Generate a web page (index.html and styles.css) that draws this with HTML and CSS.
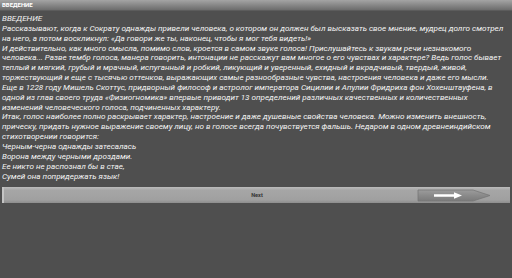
FILE: index.html
```html
<!DOCTYPE html>
<html lang="ru">

<head>
    <meta charset="UTF-8" />
    <title>Введение</title>
    <link rel="stylesheet" href="styles.css">
</head>

<body>

    <!-- Заголовок окна -->
    <div class="title-bar">ВВЕДЕНИЕ</div>

    <!-- Текст главы -->
    <div class="content">
        <p>ВВЕДЕНИЕ</p>
        <p>Рассказывают, когда к Сократу однажды привели человека, о котором он должен был высказать свое мнение, мудрец долго смотрел<br>на него, а потом воскликнул: «Да говори же ты, наконец, чтобы я мог тебя видеть!»</p>
        <p>И действительно, как много смысла, помимо слов, кроется в самом звуке голоса! Прислушайтесь к звукам речи незнакомого<br>человека... Разве тембр голоса, манера говорить, интонации не расскажут вам многое о его чувствах и характере? Ведь голос бывает<br>теплый и мягкий, грубый и мрачный, испуганный и робкий, ликующий и уверенный, ехидный и вкрадчивый, твердый, живой,<br>торжествующий и еще с тысячью оттенков, выражающих самые разнообразные чувства, настроения человека и даже его мысли.</p>
        <p>Еще в 1228 году Мишель Скоттус, придворный философ и астролог императора Сицилии и Апулии Фридриха фон Хохенштауфена, в<br>одной из глав своего труда «Физиогномика» впервые приводит 13 определений различных качественных и количественных<br>изменений человеческого голоса, подчиненных характеру.</p>
        <p>Итак, голос наиболее полно раскрывает характер, настроение и даже душевные свойства человека. Можно изменить внешность,<br>прическу, придать нужное выражение своему лицу, но в голосе всегда почувствуется фальшь. Недаром в одном древнеиндийском<br>стихотворении говорится:</p>
        <p>Черным-черна однажды затесалась<br>Ворона между черными дроздами.<br>Ее никто не распознал бы в стае,<br>Сумей она попридержать язык!</p>
    </div>

    <!-- Кнопка "дальше" -->
    <div class="nav-bar">
        <span class="nav-label">Next</span>
        <svg class="nav-arrow" width="74" height="13" viewBox="0 0 74 13">
            <defs>
                <linearGradient id="body" x1="0" y1="0" x2="0" y2="1">
                    <stop offset="0" stop-color="#9c9c9c" />
                    <stop offset="0.5" stop-color="#8a8a8a" />
                    <stop offset="1" stop-color="#7a7a7a" />
                </linearGradient>
            </defs>
            <path d="M1 1 H56 L73 6.5 L56 12 H1 Z" fill="url(#body)" stroke="#777" stroke-width="0.8" />
            <path d="M17 5.2 H37 V3.2 L45 6.5 L37 9.8 V7.8 H17 Z" fill="#fff" />
        </svg>
    </div>

</body>

</html>
```

FILE: styles.css
```css
body {
    margin: 0;
    background-color: #4f4f4f;
    font-family: Roboto, "Liberation Sans", sans-serif;
    width: 512px;
    height: 278px;
    overflow: hidden;
}

/* Заголовок */
.title-bar {
    height: 10px;
    line-height: 10px;
    padding-left: 2px;
    font-size: 6px;
    font-weight: bold;
    color: #fff;
    background: linear-gradient(#a4a4a4, #6c6c6c);
    border-bottom: 1px solid #5c5c5c;
}

/* Текст */
.content {
    padding: 3px 2px 0 2px;
    color: #f4f4f4;
    font-style: italic;
    font-size: 8.1px;
    line-height: 9.85px;
    white-space: nowrap;
}

.content p {
    margin: 0;
}

/* Нижняя панель */
.nav-bar {
    position: relative;
    margin: 5.5px 2px 0 2px;
    height: 16px;
    display: flex;
    align-items: center;
    justify-content: center;
    background: linear-gradient(#bcbcbc, #a6a6a6 20%, #a0a0a0 80%, #8e8e8e);
    border-left: 2px solid #c4c4c4;
}

.nav-label {
    font-size: 5.5px;
    font-weight: bold;
    color: #333;
}

.nav-arrow {
    position: absolute;
    left: 413px;
    top: 2px;
}
```
